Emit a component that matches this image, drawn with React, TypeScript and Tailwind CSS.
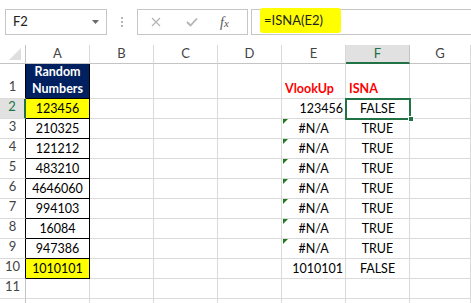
import React from "react";

type Row = { n: number; a?: string; e?: string; f?: string; yellow?: boolean };

const rows: Row[] = [
  { n: 2, a: "123456", e: "123456", f: "FALSE", yellow: true },
  { n: 3, a: "210325", e: "#N/A", f: "TRUE" },
  { n: 4, a: "121212", e: "#N/A", f: "TRUE" },
  { n: 5, a: "483210", e: "#N/A", f: "TRUE" },
  { n: 6, a: "4646060", e: "#N/A", f: "TRUE" },
  { n: 7, a: "994103", e: "#N/A", f: "TRUE" },
  { n: 8, a: "16084", e: "#N/A", f: "TRUE" },
  { n: 9, a: "947386", e: "#N/A", f: "TRUE" },
  { n: 10, a: "1010101", e: "1010101", f: "FALSE", yellow: true },
  { n: 11 },
  { n: 12 }
];

const cols = ["A", "B", "C", "D", "E", "F", "G"];

const cell = "border-r border-b border-[#dadada] flex items-end pb-[1px] leading-[17px] text-[12.5px]";

const FormulaBar = () => (
  <div className="h-[45px] flex items-start pt-[9px] font-['Lato','Liberation_Sans',sans-serif] text-[13px] text-[#222]">
    <div className="ml-[5px] w-[102px] h-[26px] border border-[#c6c6c6] flex items-center pl-[7px] pr-[7px] justify-between">
      <span>F2</span>
      <svg width="7" height="4" viewBox="0 0 7 4">
        <path d="M0 0 L7 0 L3.5 4 Z" fill="#6a6a6a" />
      </svg>
    </div>
    <div className="w-[30px] h-[26px] flex flex-col items-center justify-center gap-[2px]">
      <span className="w-[2px] h-[2px] bg-[#b5b5b5]" />
      <span className="w-[2px] h-[2px] bg-[#b5b5b5]" />
      <span className="w-[2px] h-[2px] bg-[#b5b5b5]" />
    </div>
    <div className="w-[111px] h-[26px] border border-[#c6c6c6] flex items-center">
      <svg className="ml-[13px]" width="10" height="10" viewBox="0 0 10 10">
        <path d="M1 1 L9 9 M9 1 L1 9" stroke="#b3b3b3" strokeWidth="1.2" />
      </svg>
      <svg className="ml-[25px]" width="12" height="10" viewBox="0 0 12 10">
        <path d="M1 5 L4.5 8.5 L11 1.5" stroke="#b3b3b3" strokeWidth="1.8" fill="none" />
      </svg>
      <span className="ml-[22px] font-['Liberation_Serif',serif] italic text-[14px] text-[#555]">
        f<span className="text-[11px]">x</span>
      </span>
    </div>
    <div className="ml-[3px] flex-1 h-[26px] border-t border-b border-l border-[#c6c6c6] flex items-center pl-[8px] relative">
      <span className="relative h-[25px] -mt-[3px] flex items-center bg-[#ffff00] pl-[4px] pr-[18px] rounded-[3px]">
        =ISNA(E2)
      </span>
    </div>
  </div>
);

export default function App() {
  return (
    <div className="w-[471px] h-[303px] overflow-hidden bg-white text-black font-['Lato','Liberation_Sans',sans-serif]">
      <FormulaBar />
      <div className="grid grid-cols-[26px_64px_64px_64px_64px_64px_64px_1fr] grid-rows-[19px_35px_repeat(11,20px)]">
        {/* header row */}
        <div className="relative border-r border-b border-[#c4c4c4]">
          <svg className="absolute right-[4px] bottom-[3px]" width="12" height="12" viewBox="0 0 12 12">
            <path d="M12 0 L12 12 L0 12 Z" fill="#dfdfdf" />
          </svg>
        </div>
        {cols.map((c) =>
          c === "F" ? (
            <div
              key={c}
              className="bg-[#e1e1e1] border-r border-[#c4c4c4] border-b-2 border-b-[#217346] flex items-center justify-center text-[13px] text-[#217346]"
            >
              {c}
            </div>
          ) : (
            <div
              key={c}
              className="border-r border-[#dadada] border-b border-b-[#c4c4c4] flex items-center justify-center text-[13px] text-[#444]"
            >
              {c}
            </div>
          )
        )}

        {/* row 1 */}
        <div className="border-r border-r-black border-b border-b-[#dadada] flex items-end justify-center pb-[2px] text-[13px] text-[#444]">1</div>
        <div className="bg-[#002060] border-r border-b border-black flex items-end justify-center text-center pb-[1px] leading-[17px] text-[12.5px] font-bold text-white">
          Random
          <br />
          Numbers
        </div>
        <div className={cell} />
        <div className={cell} />
        <div className={cell} />
        <div className={`${cell} pl-[3px] font-bold text-[#ff0000]`}>VlookUp</div>
        <div className={`${cell} pl-[3px] font-bold text-[#ff0000]`}>ISNA</div>
        <div className={cell} />

        {rows.map((r) => {
          const inA = r.n <= 10;
          const sel = r.n === 2;
          return (
            <React.Fragment key={r.n}>
              <div
                className={
                  sel
                    ? "bg-[#e1e1e1] border-r-2 border-r-[#217346] border-b border-b-[#dadada] flex items-end justify-center pb-[2px] text-[13px] text-[#217346]"
                    : inA
                    ? "border-r border-r-black border-b border-b-[#dadada] flex items-end justify-center pb-[2px] text-[13px] text-[#444]"
                    : "border-r border-r-[#c4c4c4] border-b border-b-[#dadada] flex items-end justify-center pb-[2px] text-[13px] text-[#444]"
                }
              >
                {r.n < 12 ? r.n : null}
              </div>
              <div
                className={
                  inA
                    ? `border-r border-b border-black flex items-end justify-center pb-[1px] leading-[17px] text-[12.5px] ${r.yellow ? "bg-[#ffff00]" : ""}`
                    : cell
                }
              >
                {r.a}
              </div>
              <div className={cell} />
              <div className={cell} />
              <div className={cell} />
              <div
                className={`${cell} relative ${
                  r.e === "#N/A" ? "justify-center" : "justify-end pr-[2px]"
                }`}
              >
                {r.e === "#N/A" && (
                  <span className="absolute left-[1px] top-0 w-0 h-0 border-t-[5px] border-t-[#1f7a1f] border-r-[5px] border-r-transparent" />
                )}
                {r.e}
              </div>
              <div className={`${cell} relative justify-center`}>
                {sel && (
                  <>
                    <span className="absolute left-[-1px] top-[-1px] w-[66px] h-[22px] border-2 border-[#217346] z-10" />
                    <span className="absolute left-[62px] top-[17px] w-[6px] h-[6px] bg-[#217346] border border-white z-20" />
                  </>
                )}
                {r.f}
              </div>
              <div className={cell} />
            </React.Fragment>
          );
        })}
      </div>
    </div>
  );
}
